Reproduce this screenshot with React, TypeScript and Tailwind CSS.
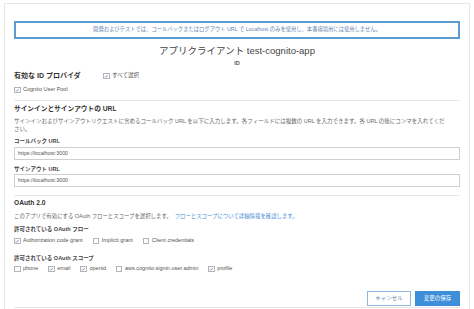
import React from "react";

const FONT = { fontFamily: '"Liberation Sans", Arial, "Noto Sans CJK JP", sans-serif' };

function Box({ checked, label }: { checked?: boolean; label: string }) {
  return (
    <div className="flex items-center gap-[2.5px]">
      <span className="flex h-[6.5px] w-[6.5px] items-center justify-center border border-[#b5b5b5] bg-white">
        {checked && (
          <svg viewBox="0 0 10 10" className="h-[6.5px] w-[6.5px]">
            <path d="M1.8 5.2 L4 7.4 L8.4 2.4" fill="none" stroke="#3b7fc4" strokeWidth="1.6" />
          </svg>
        )}
      </span>
      <span className="text-[5.5px] leading-none text-[#555]">{label}</span>
    </div>
  );
}

export default function App() {
  return (
    <div className="h-[309px] w-[474px] overflow-hidden bg-white" style={FONT}>
      <div className="ml-[4px] mt-[3px] w-[466px] border border-[#e8e8e8] px-[9px] pb-4">
        {/* 注意 */}
        <div className="mt-[17px] flex h-[18px] items-center justify-center border-2 border-[#5b9bd0]">
          <span className="text-[5.3px] text-[#5f86b3]">
            開発およびテストでは、コールバックまたはログアウト URL で Localhost のみを使用し、本番環境用には使用しません。
          </span>
        </div>

        <div className="mt-[6px] flex h-[12px] items-center justify-center text-[9.5px] text-[#444]">
          アプリクライアント test-cognito-app
        </div>
        <div className="mt-[2px] flex h-[8px] items-center justify-center text-[5.5px] font-bold text-[#555]">ID</div>

        <div className="mt-[5px] flex h-[8px] items-center">
          <span className="w-[89px] text-[7px] font-bold text-[#333]">有効な ID プロバイダ</span>
          <Box checked label="すべて選択" />
        </div>
        <div className="mt-[6px] flex h-[8px] items-center">
          <Box checked label="Cognito User Pool" />
        </div>

        <div className="mt-[6px] border-t border-[#e6e6e6]" />

        <div className="mt-[4px] flex h-[8px] items-center text-[6.7px] font-bold text-[#333]">
          サインインとサインアウトの URL
        </div>
        <p className="mt-[5px] pr-[14px] text-[5.5px] leading-[7.5px] text-[#666]">
          サインインおよびサインアウトリクエストに含めるコールバック URL を以下に入力します。各フィールドには複数の URL を入力できます。各 URL の後にコンマを入れてください。
        </p>

        <div className="mt-[4px] flex h-[8px] items-center text-[5.5px] font-bold text-[#444]">コールバック URL</div>
        <div className="mt-[2px] flex h-[13px] items-center border border-[#cfcfcf] px-[3px] text-[5.3px] text-[#555]">
          https://localhost:3000
        </div>

        <div className="mt-[5px] flex h-[8px] items-center text-[5.5px] font-bold text-[#444]">サインアウト URL</div>
        <div className="mt-[1px] flex h-[13px] items-center border border-[#cfcfcf] px-[3px] text-[5.3px] text-[#555]">
          https://localhost:3000
        </div>

        <div className="mt-[8px] border-t border-[#e6e6e6]" />

        <div className="mt-[3px] flex h-[8px] items-center text-[6.7px] font-semibold text-[#333]">OAuth 2.0</div>
        <div className="mt-[5px] flex h-[8px] items-center text-[5.4px] text-[#666]">
          このアプリで有効にする OAuth フローとスコープを選択します。
          <span className="ml-[3px] text-[#4a90d9]">フローとスコープについて詳細情報を確認します。</span>
        </div>

        <div className="mt-[5px] flex h-[9px] items-center text-[5.5px] font-bold text-[#444]">許可されている OAuth フロー</div>
        <div className="mt-[3px] flex h-[8px] items-center gap-[10px]">
          <Box checked label="Authorization code grant" />
          <Box label="Implicit grant" />
          <Box label="Client credentials" />
        </div>

        <div className="mt-[9px] flex h-[8px] items-center text-[5.5px] font-bold text-[#444]">許可されている OAuth スコープ</div>
        <div className="mt-[3px] flex h-[8px] items-center gap-[10px]">
          <Box label="phone" />
          <Box checked label="email" />
          <Box checked label="openid" />
          <Box label="aws.cognito.signin.user.admin" />
          <Box checked label="profile" />
        </div>

        <div className="mt-[18px] flex justify-end gap-[4px]">
          <button className="flex h-[15px] w-[44px] items-center justify-center border border-[#8fb8e0] bg-white text-[5.5px] text-[#6a8bb0]">
            キャンセル
          </button>
          <button className="flex h-[15px] w-[45px] items-center justify-center bg-[#3d8fd9] text-[5.5px] text-white">
            変更の保存
          </button>
        </div>
        <div className="mt-[1px] border-t border-[#e6e6e6]" />
      </div>
    </div>
  );
}
